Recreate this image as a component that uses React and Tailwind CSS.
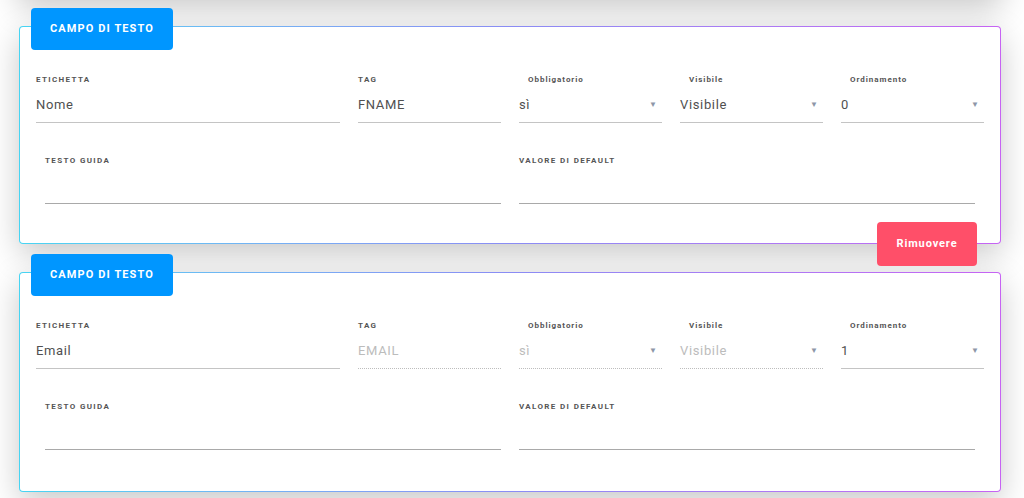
import React from 'react';

const fields = [
  {
    etichetta: 'Nome',
    tag: 'FNAME',
    obbligatorio: 'sì',
    visibile: 'Visibile',
    ordinamento: '0',
    locked: false,
    removable: true,
  },
  {
    etichetta: 'Email',
    tag: 'EMAIL',
    obbligatorio: 'sì',
    visibile: 'Visibile',
    ordinamento: '1',
    locked: true,
    removable: false,
  },
];

const Label = ({ children, indent }) => (
  <div
    className={`h-[10px] text-[8px] leading-[10px] font-bold text-[#555] ${
      indent ? 'pl-[9px] tracking-[0.12em]' : 'tracking-[0.17em]'
    }`}
  >
    {children}
  </div>
);

const Input = ({ label, value, indent, disabled, select, className = '' }) => (
  <div className={`flex flex-col ${className}`}>
    <Label indent={indent}>{label}</Label>
    <div
      className={`flex items-center justify-between pt-[11px] pb-[8px] pr-[5px] border-b ${
        disabled ? 'border-dotted border-[#bdbdbd]' : 'border-[#c4c4c4]'
      }`}
    >
      <span
        className={`text-[13px] leading-[18px] tracking-[0.05em] ${disabled ? 'text-[#bcbcbc]' : 'text-[#505050]'}`}
      >
        {value}
      </span>
      {select && <span className="text-[8px] leading-[18px] text-[#8e96a8]">▼</span>}
    </div>
  </div>
);

const TextArea = ({ label }) => (
  <div className="flex-1 flex flex-col">
    <Label>{label}</Label>
    <div className="h-[38px] border-b border-[#a9a9a9]" />
  </div>
);

const Card = ({ field }) => (
  <div className="relative ml-[19px] w-[982px] pt-[18px]">
    <div className="absolute top-0 left-[12px] z-10 w-[142px] h-[42px] rounded-[4px] bg-[#0096ff] flex items-center justify-center text-white text-[11px] font-bold tracking-[0.1em]">
      CAMPO DI TESTO
    </div>
    <div className="rounded-[4px] p-px bg-gradient-to-r from-[#46d4f2] via-[#8a8cf4] to-[#c663f3] shadow-[0_10px_32px_rgba(0,0,0,0.22)]">
      <div className={`rounded-[3px] bg-white pt-[48px] ${field.removable ? 'pb-[39px]' : 'pb-[41px]'}`}>
        <div className="flex gap-[18px] px-[16px]">
          <Input className="w-[304px]" label="ETICHETTA" value={field.etichetta} />
          <Input className="w-[143px]" label="TAG" value={field.tag} disabled={field.locked} />
          <Input className="w-[143px]" label="Obbligatorio" value={field.obbligatorio} indent select disabled={field.locked} />
          <Input className="w-[143px]" label="Visibile" value={field.visibile} indent select disabled={field.locked} />
          <Input className="w-[143px]" label="Ordinamento" value={field.ordinamento} indent select />
        </div>
        <div className="flex gap-[18px] px-[25px] mt-[33px]">
          <TextArea label="TESTO GUIDA" />
          <TextArea label="VALORE DI DEFAULT" />
        </div>
      </div>
    </div>
    {field.removable && (
      <button className="absolute right-[24px] bottom-[-22px] z-10 w-[100px] h-[44px] rounded-[4px] bg-[#ff4f69] text-white text-[11px] font-bold tracking-[0.08em]">
        Rimuovere
      </button>
    )}
  </div>
);

export default function App() {
  return (
    <div
      className="h-[498px] overflow-hidden bg-white"
      style={{ fontFamily: 'Roboto, "Liberation Sans", sans-serif' }}
    >
      <div className="flex flex-col gap-[10px] -mt-[220px]">
        <div className="ml-[19px] w-[982px] h-[218px] rounded-[4px] bg-white shadow-[0_10px_32px_rgba(0,0,0,0.22)]" />
        {fields.map((f) => (
          <Card key={f.tag} field={f} />
        ))}
      </div>
    </div>
  );
}
